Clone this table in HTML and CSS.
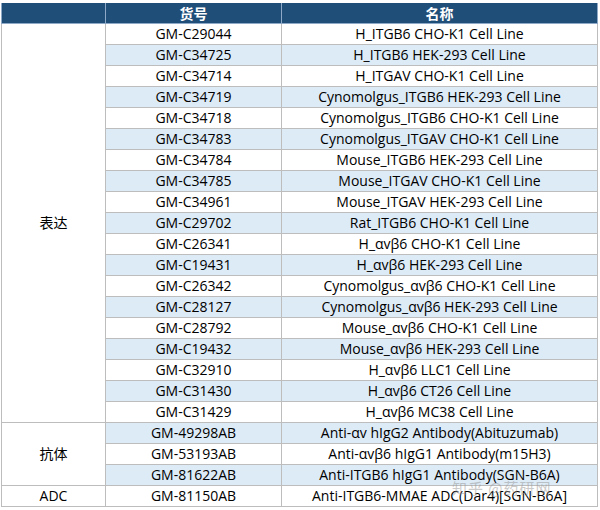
FILE: index.html
```html
<!DOCTYPE html>
<html lang="zh">
<head>
<meta charset="utf-8">
<link rel="stylesheet" href="styles.css">
</head>
<body>
<div class="sheet">
<table class="grid">
  <colgroup>
    <col class="c1"><col class="c2"><col class="c3">
  </colgroup>
  <thead>
    <tr><th></th><th>货号</th><th>名称</th></tr>
  </thead>
  <tbody>
    <tr><td class="cat" rowspan="19">表达</td><td>GM-C29044</td><td>H_ITGB6 CHO-K1 Cell Line</td></tr>
    <tr class="alt"><td>GM-C34725</td><td>H_ITGB6 HEK-293 Cell Line</td></tr>
    <tr><td>GM-C34714</td><td>H_ITGAV CHO-K1 Cell Line</td></tr>
    <tr class="alt"><td>GM-C34719</td><td>Cynomolgus_ITGB6 HEK-293 Cell Line</td></tr>
    <tr><td>GM-C34718</td><td>Cynomolgus_ITGB6 CHO-K1 Cell Line</td></tr>
    <tr class="alt"><td>GM-C34783</td><td>Cynomolgus_ITGAV CHO-K1 Cell Line</td></tr>
    <tr><td>GM-C34784</td><td>Mouse_ITGB6 HEK-293 Cell Line</td></tr>
    <tr class="alt"><td>GM-C34785</td><td>Mouse_ITGAV CHO-K1 Cell Line</td></tr>
    <tr><td>GM-C34961</td><td>Mouse_ITGAV HEK-293 Cell Line</td></tr>
    <tr class="alt"><td>GM-C29702</td><td>Rat_ITGB6 CHO-K1 Cell Line</td></tr>
    <tr><td>GM-C26341</td><td>H_αvβ6 CHO-K1 Cell Line</td></tr>
    <tr class="alt"><td>GM-C19431</td><td>H_αvβ6 HEK-293 Cell Line</td></tr>
    <tr><td>GM-C26342</td><td>Cynomolgus_αvβ6 CHO-K1 Cell Line</td></tr>
    <tr class="alt"><td>GM-C28127</td><td>Cynomolgus_αvβ6 HEK-293 Cell Line</td></tr>
    <tr><td>GM-C28792</td><td>Mouse_αvβ6 CHO-K1 Cell Line</td></tr>
    <tr class="alt"><td>GM-C19432</td><td>Mouse_αvβ6 HEK-293 Cell Line</td></tr>
    <tr><td>GM-C32910</td><td>H_αvβ6 LLC1 Cell Line</td></tr>
    <tr class="alt"><td>GM-C31430</td><td>H_αvβ6 CT26 Cell Line</td></tr>
    <tr><td>GM-C31429</td><td>H_αvβ6 MC38 Cell Line</td></tr>
    <tr class="alt"><td class="cat" rowspan="3">抗体</td><td>GM-49298AB</td><td>Anti-αv hIgG2 Antibody(Abituzumab)</td></tr>
    <tr><td>GM-53193AB</td><td>Anti-αvβ6 hIgG1 Antibody(m15H3)</td></tr>
    <tr class="alt"><td>GM-81622AB</td><td>Anti-ITGB6 hIgG1 Antibody(SGN-B6A)</td></tr>
    <tr><td class="cat">ADC</td><td>GM-81150AB</td><td>Anti-ITGB6-MMAE ADC(Dar4)[SGN-B6A]</td></tr>
  </tbody>
</table>
<div class="watermark">知乎 @药研网</div>
</div>
</body>
</html>
```
FILE: styles.css
```css
html, body {
  margin: 0;
  padding: 0;
  background: #ffffff;
}
.sheet {
  position: relative;
  width: 600px;
  height: 510px;
  padding: 3px 0 0 1px;
  box-sizing: border-box;
}
.grid {
  border-collapse: collapse;
  table-layout: fixed;
  width: 596px;
  font-family: "Open Sans", "Noto Sans CJK SC", sans-serif;
  font-size: 14px;
  color: #000000;
}
.c1 { width: 104px; }
.c2 { width: 176px; }
.c3 { width: 316px; }
.grid th {
  background: #1f4e79;
  color: #ffffff;
  font-family: "Noto Sans CJK SC", sans-serif;
  font-weight: 700;
  font-size: 14px;
  height: 20px;
  padding: 0;
  border: 1px solid #8ea9c8;
  border-top: none;
  line-height: 20px;
}
.grid td {
  height: 20px;
  padding: 0;
  border: 1px solid #bdbdbd;
  text-align: center;
  line-height: 20px;
  white-space: nowrap;
}
.grid tr.alt td {
  background: #ddebf7;
}
.grid tr.alt td.cat,
.grid td.cat {
  background: #ffffff;
}
.watermark {
  position: absolute;
  left: 452px;
  top: 477px;
  font-family: "Noto Sans CJK SC", sans-serif;
  font-size: 15px;
  color: rgba(150, 150, 150, 0.5);
  letter-spacing: 1px;
}
```
